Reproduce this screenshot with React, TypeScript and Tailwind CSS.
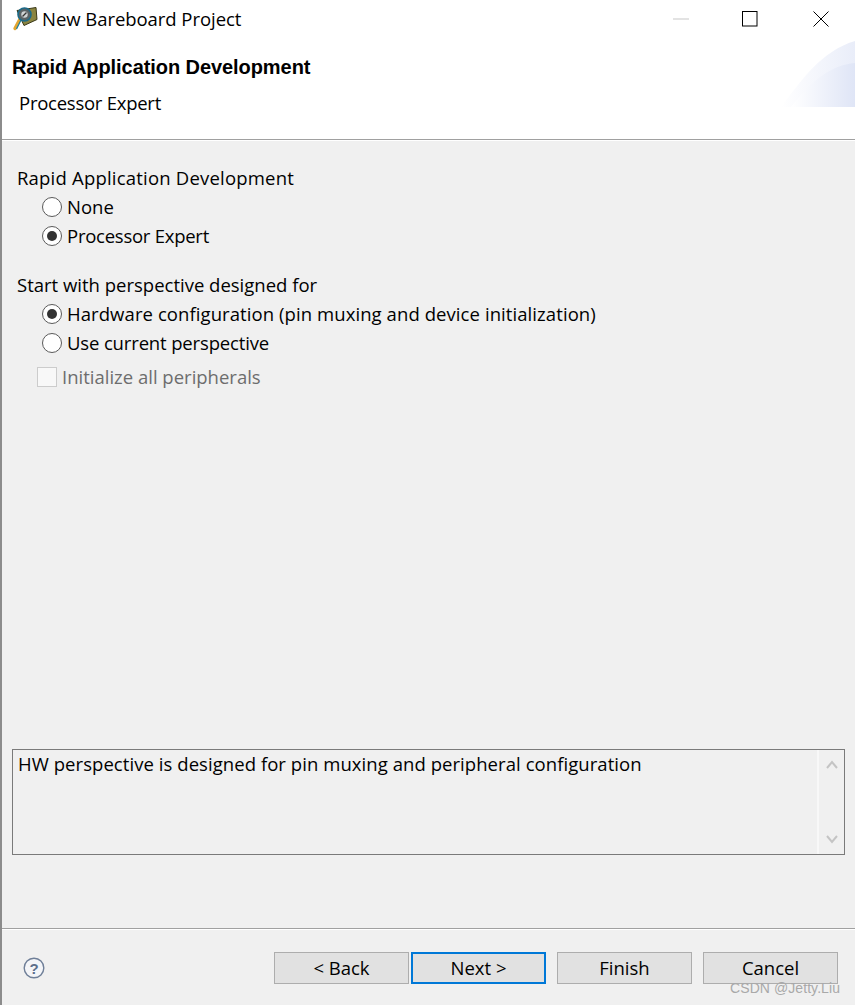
import React from "react";

const font = "[font-family:'Open_Sans','Noto_Sans',sans-serif]";

function Radio({ on, label, track }: { on?: boolean; label: string; track?: string }) {
  return (
    <div className="flex h-[29px] items-center pl-[25px]">
      <span className="flex h-[20px] w-[20px] shrink-0 items-center justify-center rounded-full border-[1.5px] border-[#5a5a5a] bg-white">
        {on && <span className="h-[10px] w-[10px] rounded-full bg-[#333333]" />}
      </span>
      <span className={`ml-[5px] whitespace-nowrap text-[18.5px] text-black ${track ?? ""}`}>{label}</span>
    </div>
  );
}

function Btn({ label, focus }: { label: string; focus?: boolean }) {
  return (
    <div
      className={`flex h-[32px] w-[135px] items-center justify-center bg-[#e1e1e1] text-[18.5px] text-black ${
        focus ? "border-2 border-[#0078d7]" : "border border-[#adadad]"
      }`}
    >
      {label}
    </div>
  );
}

function Logo() {
  return (
    <svg width="26" height="26" viewBox="0 0 26 26" className="shrink-0">
      <path d="M5 4.5 L24 1.5 L25 13.5 L12 19.5 Z" fill="#8a8440" stroke="#3a3818" strokeWidth="1" />
      <path d="M8 13 L3 22.5" stroke="#e3a52f" strokeWidth="3.4" strokeLinecap="round" />
      <path d="M9 14 L4.5 23" stroke="#1d7fa0" strokeWidth="1.2" />
      <circle cx="12.5" cy="8.5" r="6.5" fill="#5a6266" stroke="#1c6a88" strokeWidth="1.6" />
      <circle cx="12.5" cy="8.5" r="3.2" fill="#cfd2d4" />
      <path d="M10.5 10.5 L14.5 6.5" stroke="#333" strokeWidth="1.3" />
    </svg>
  );
}

export default function App() {
  return (
    <div className={`relative flex h-[1005px] w-[855px] flex-col overflow-hidden border-l-2 border-[#8c8c8c] bg-[#f0f0f0] ${font}`}>
      {/* title bar + banner */}
      <div className="relative h-[139px] shrink-0 bg-white">
        <div className="flex h-[38px] items-center pl-[10px]">
          <Logo />
          <span className="ml-[4px] text-[18.5px] tracking-[-0.05px] text-black">New Bareboard Project</span>
          <div className="ml-auto flex items-center">
            <svg width="16" height="2" className="mr-[53px]"><rect width="16" height="1" y="0.5" fill="#c8c8c8" /></svg>
            <svg width="16" height="16" className="mr-[55px]"><rect x="0.5" y="0.5" width="14.5" height="14.5" fill="none" stroke="#000" /></svg>
            <svg width="16" height="16" className="mr-[26px]"><path d="M0.5 0.5 L15.5 15.5 M15.5 0.5 L0.5 15.5" stroke="#000" /></svg>
          </div>
        </div>
        <div className="pl-[10px] pt-[15px] text-[20px] font-bold leading-[28px] tracking-[-0.07px] text-black [font-family:'Liberation_Sans',sans-serif]">
          Rapid Application Development
        </div>
        <div className="pl-[17px] pt-[10px] text-[18.5px] leading-[24px] tracking-[-0.25px] text-black">Processor Expert</div>
        <svg width="74" height="66" viewBox="0 0 74 66" className="absolute bottom-[32px] right-0">
          <defs>
            <linearGradient id="g1" x1="0" x2="1" y1="0" y2="0">
              <stop offset="0" stopColor="#ffffff" />
              <stop offset="1" stopColor="#e9edf9" />
            </linearGradient>
            <linearGradient id="g2" x1="0" x2="1" y1="0" y2="0">
              <stop offset="0" stopColor="#ffffff" />
              <stop offset="1" stopColor="#dfe5f6" />
            </linearGradient>
          </defs>
          <path d="M0 66 C20 40 40 10 74 0 V66 Z" fill="url(#g1)" />
          <path d="M10 66 C30 40 50 24 74 22 V66 Z" fill="url(#g2)" />
        </svg>
      </div>
      <div className="h-[1px] shrink-0 bg-[#a0a0a0]" />
      <div className="h-[1px] shrink-0 bg-white" />

      {/* body */}
      <div className="flex flex-1 flex-col pl-[15px]">
        <div className="mt-[22px] h-[29px] text-[18.5px] leading-[29px] tracking-[0.2px] text-black">Rapid Application Development</div>
        <Radio label="None" />
        <Radio on label="Processor Expert" track="tracking-[-0.25px]" />
        <div className="mt-[20px] h-[29px] text-[18.5px] leading-[29px] text-black">Start with perspective designed for</div>
        <Radio on label="Hardware configuration (pin muxing and device initialization)" track="tracking-[0.08px]" />
        <Radio label="Use current perspective" track="tracking-[-0.15px]" />
        <div className="mt-[5px] flex h-[29px] items-center pl-[20px]">
          <span className="h-[20px] w-[20px] shrink-0 border border-[#cccccc] bg-[#f8f8f8]" />
          <span className="ml-[5px] text-[18.5px] text-[#6d6d6d]">Initialize all peripherals</span>
        </div>

        {/* description box */}
        <div className="ml-[-5px] mr-[10px] mt-[358px] flex h-[106px] border border-[#7a7a7a] bg-[#f0f0f0]">
          <div className="flex-1 pl-[5px] pt-[1px] text-[18.5px] leading-[26px] tracking-[0.06px] text-black">
            HW perspective is designed for pin muxing and peripheral configuration
          </div>
          <div className="flex w-[27px] flex-col items-center justify-between border-l-2 border-[#f8f8f8] py-[10px]">
            <svg width="12" height="9" viewBox="0 0 12 9"><path d="M1 8 L6 2 L11 8" fill="none" stroke="#c4c4c4" strokeWidth="2" /></svg>
            <svg width="12" height="9" viewBox="0 0 12 9"><path d="M1 1 L6 7 L11 1" fill="none" stroke="#c4c4c4" strokeWidth="2" /></svg>
          </div>
        </div>
      </div>

      {/* footer */}
      <div className="h-[1px] shrink-0 bg-[#a0a0a0]" />
      <div className="h-[1px] shrink-0 bg-white" />
      <div className="flex h-[75px] shrink-0 items-start pt-[22px]">
        <svg width="22" height="22" viewBox="0 0 22 22" className="ml-[20.5px] mt-[4.5px]">
          <circle cx="11" cy="11" r="9.8" fill="#f4f5f8" stroke="#6f7f98" strokeWidth="1.4" />
          <text x="11" y="16.5" textAnchor="middle" fontSize="15" fontWeight="700" fill="#5d6f8c" fontFamily="Liberation Sans">?</text>
        </svg>
        <div className="ml-auto mr-[17px] flex">
          <Btn label="< Back" />
          <div className="ml-[2px]"><Btn focus label="Next >" /></div>
          <div className="ml-[11px]"><Btn label="Finish" /></div>
          <div className="ml-[11px]"><Btn label="Cancel" /></div>
        </div>
      </div>

      <div className="absolute bottom-[8px] right-[15px] text-[14px] leading-[18px] tracking-[0.07px] text-[#a9a9a9] [font-family:'Liberation_Sans',sans-serif]">
        CSDN @Jetty.Liu
      </div>
    </div>
  );
}
